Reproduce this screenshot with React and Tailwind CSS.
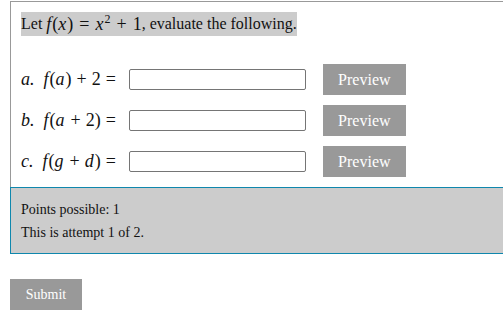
const serif = "font-['Liberation_Serif','Times_New_Roman',serif]";

function Op({ children, wide }) {
  return <span className={wide ? "mx-[6px] not-italic" : "mx-[5px] not-italic"}>{children}</span>;
}

function I({ children }) {
  return <span className="italic pr-[1px]">{children}</span>;
}

function Row({ letter, children }) {
  return (
    <div className="flex items-center h-[31px]">
      <div className="flex items-center text-[18px] text-[#111] whitespace-nowrap">
        <span className="italic mr-[9px]">{letter}.</span>
        {children}
      </div>
      <input
        type="text"
        className="ml-[8px] w-[177px] h-[21px] border border-[#757575] rounded-[2px] bg-white outline-none"
      />
      <button className="ml-[17px] w-[83px] h-[31px] bg-[#999999] text-white text-[16px] leading-none">
        Preview
      </button>
    </div>
  );
}

export default function App() {
  return (
    <div className={`${serif} w-[503px] h-[317px] bg-white overflow-hidden text-[#111]`}>
      <div className="ml-[10px] mt-[1px] border-l border-t border-[#999999] pl-[10px] pt-[10px] pb-[10px]">
        <div className="flex items-center h-[24px] text-[16px] leading-[24px]">
          <span className="bg-[#cccccc] h-[24px] pr-[4px]">Let</span>
          <span className="bg-[#cccccc] h-[24px] text-[18px] whitespace-nowrap">
            <I>f</I>(<I>x</I>)
          </span>
          <span className="bg-[#cccccc] h-[24px] text-[18px] whitespace-nowrap">
            <Op wide>=</Op>
            <I>x</I>
            <span className="text-[12px] relative -top-[7px]">2</span>
            <Op wide>+</Op>1
          </span>
          <span className="bg-[#cccccc] h-[24px] whitespace-pre">, evaluate the following.</span>
        </div>
        <div className="mt-[28px] flex flex-col gap-[10px]">
          <Row letter="a">
            <I>f</I>(<I>a</I>)<Op>+</Op>2<Op>=</Op>
          </Row>
          <Row letter="b">
            <I>f</I>(<I>a</I>
            <Op>+</Op>2)<Op>=</Op>
          </Row>
          <Row letter="c">
            <I>f</I>(<I>g</I>
            <Op>+</Op>
            <I>d</I>)<Op>=</Op>
          </Row>
        </div>
      </div>
      <div className="ml-[10px] border-l border-t border-b border-[#0f87ad] bg-[#cccccc] pl-[10px] pt-[10px] pb-[9px] text-[14px] leading-[23px] text-[#111]">
        <p>Points possible: 1</p>
        <p>This is attempt 1 of 2.</p>
      </div>
      <button className="ml-[10px] mt-[25px] w-[72px] h-[31px] bg-[#999999] text-white text-[14px] leading-none">
        Submit
      </button>
    </div>
  );
}
